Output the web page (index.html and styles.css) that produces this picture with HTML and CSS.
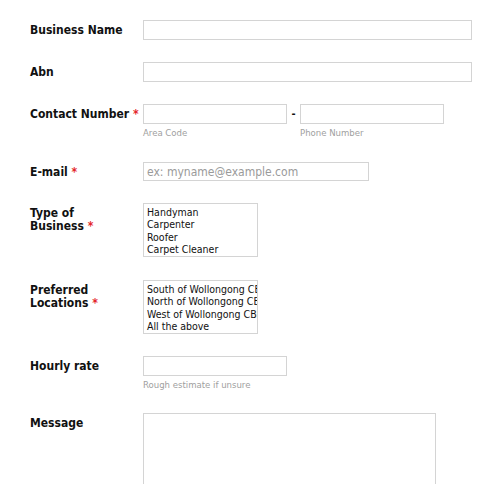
FILE: index.html
```html
<!DOCTYPE html>
<html>
<head>
<meta charset="utf-8">
<link rel="stylesheet" href="styles.css">
</head>
<body>
<form class="form">
  <div class="row">
    <label class="label">Business Name</label>
    <div class="field"><input class="input input-full" type="text"></div>
  </div>
  <div class="row">
    <label class="label">Abn</label>
    <div class="field"><input class="input input-full" type="text"></div>
  </div>
  <div class="row">
    <label class="label">Contact Number <span class="req">*</span></label>
    <div class="field phone">
      <div class="sub">
        <input class="input input-short" type="text">
        <span class="sublabel">Area Code</span>
      </div>
      <span class="dash">-</span>
      <div class="sub">
        <input class="input input-short" type="text">
        <span class="sublabel">Phone Number</span>
      </div>
    </div>
  </div>
  <div class="row">
    <label class="label">E-mail <span class="req">*</span></label>
    <div class="field"><input class="input input-email" type="text" placeholder="ex: myname@example.com"></div>
  </div>
  <div class="row row-wide">
    <label class="label">Type of<br>Business <span class="req">*</span></label>
    <div class="field">
      <div class="listbox">
        <div class="opt">Handyman</div>
        <div class="opt">Carpenter</div>
        <div class="opt">Roofer</div>
        <div class="opt">Carpet Cleaner</div>
      </div>
    </div>
  </div>
  <div class="row">
    <label class="label">Preferred<br>Locations <span class="req">*</span></label>
    <div class="field">
      <div class="listbox">
        <div class="opt">South of Wollongong CBD</div>
        <div class="opt">North of Wollongong CBD</div>
        <div class="opt">West of Wollongong CBD</div>
        <div class="opt">All the above</div>
      </div>
    </div>
  </div>
  <div class="row row-narrow">
    <label class="label">Hourly rate</label>
    <div class="field sub">
      <input class="input input-short" type="text">
      <span class="sublabel">Rough estimate if unsure</span>
    </div>
  </div>
  <div class="row">
    <label class="label">Message</label>
    <div class="field"><textarea class="textarea"></textarea></div>
  </div>
</form>
</body>
</html>
```

FILE: styles.css
```css
html, body {
  margin: 0;
  padding: 0;
  background: #fff;
}
body {
  font-family: "DejaVu Sans Condensed", "DejaVu Sans", Verdana, sans-serif;
  color: #111;
}
.form {
  padding: 20px 0 0 30px;
}
.row {
  display: flex;
  align-items: flex-start;
  margin-bottom: 22px;
}
.row-wide { margin-bottom: 23px; }
.row-narrow { margin-bottom: 21px; }
.label {
  width: 113px;
  flex: none;
  font-size: 12px;
  font-weight: bold;
  line-height: 13px;
  padding-top: 4px;
  color: #111;
}
.req {
  color: #e4252a;
}
.field {
  display: flex;
}
.input {
  box-sizing: border-box;
  height: 20px;
  border: 1px solid #d4d4d4;
  margin: 0;
  padding: 2px 3px;
  font-family: "DejaVu Sans Condensed", "DejaVu Sans", Verdana, sans-serif;
  font-size: 12px;
  color: #333;
  background: #fff;
  outline: none;
}
.input::placeholder {
  color: #9a9a9a;
}
.input-full { width: 329px; }
.input-short { width: 144px; }
.input-email { width: 226px; height: 19px; }
.sub {
  display: flex;
  flex-direction: column;
}
.sublabel {
  font-size: 9.5px;
  line-height: 14px;
  margin-top: 2px;
  color: #a0a0a0;
}
.phone {
  align-items: flex-start;
}
.dash {
  width: 13px;
  text-align: center;
  font-size: 11px;
  font-weight: bold;
  line-height: 20px;
}
.listbox {
  box-sizing: border-box;
  width: 115px;
  height: 54px;
  border: 1px solid #d4d4d4;
  padding: 2px 3px;
  overflow: hidden;
  font-size: 10.5px;
}
.opt {
  white-space: nowrap;
  line-height: 12.3px;
  color: #111;
}
.textarea {
  box-sizing: border-box;
  width: 293px;
  height: 90px;
  border: 1px solid #d4d4d4;
  margin: 0;
  padding: 2px;
  resize: both;
  outline: none;
}
```
